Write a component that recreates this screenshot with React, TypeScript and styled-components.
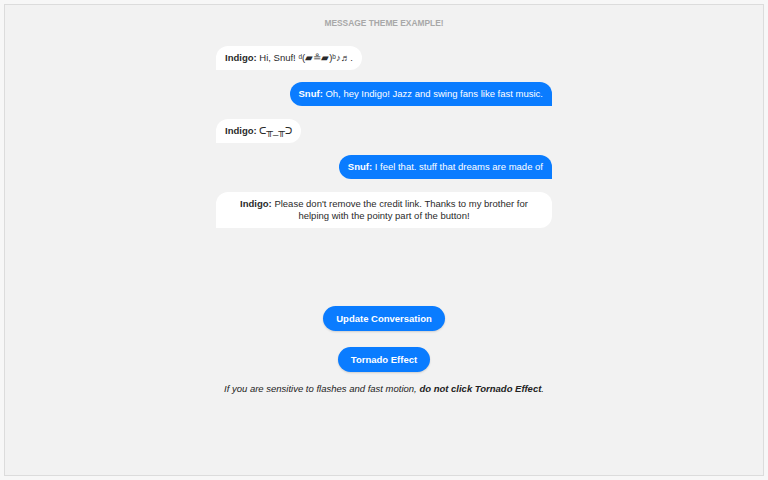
import styled, { createGlobalStyle } from 'styled-components';

const GlobalStyle = createGlobalStyle`
  html, body {
    margin: 0;
    padding: 0;
    background-color: #f7f7f7;
  }
  body {
    padding: 4px;
    font-family: "Liberation Sans", Arial, sans-serif;
  }
`;

const Frame = styled.div`
  box-sizing: border-box;
  height: 472px;
  border: 1px solid #dcdcdc;
  background-color: #f2f2f2;
  display: flex;
  flex-direction: column;
  align-items: center;
`;

const Title = styled.div`
  margin-top: 13px;
  font-size: 8.4px;
  font-weight: 700;
  color: #a8a8a8;
  text-transform: uppercase;
`;

const Conversation = styled.div`
  width: 336px;
  margin-top: 18px;
  height: 244px;
  display: flex;
  flex-direction: column;
  gap: 12.4px;
`;

const Bubble = styled.div<{ $from: 'left' | 'right'; $wide?: boolean }>`
  box-sizing: border-box;
  max-width: 100%;
  align-self: ${(p) => (p.$from === 'left' ? 'flex-start' : 'flex-end')};
  width: ${(p) => (p.$wide ? '100%' : 'auto')};
  text-align: ${(p) => (p.$wide ? 'center' : 'left')};
  padding: 6px ${(p) => (p.$wide ? '20px' : '9px')};
  font-size: 9.5px;
  line-height: 12px;
  border-radius: ${(p) => (p.$from === 'left' ? '12px 12px 12px 0' : '12px 12px 0 12px')};
  background-color: ${(p) => (p.$from === 'left' ? '#ffffff' : '#0a7cff')};
  color: ${(p) => (p.$from === 'left' ? '#2a2a2a' : '#ffffff')};

  b {
    font-weight: 700;
  }
`;

const Button = styled.button`
  margin-top: 16px;
  border: none;
  border-radius: 13px;
  height: 25px;
  padding: 0 13px;
  background-color: #0a7cff;
  color: #ffffff;
  font-family: "Liberation Sans", Arial, sans-serif;
  font-size: 9.5px;
  font-weight: 700;
  box-shadow: 0 1px 2px rgba(0, 0, 0, 0.15);
  cursor: pointer;
`;

const Warning = styled.p`
  margin: 11px 0 0;
  font-size: 9.5px;
  font-style: italic;
  color: #222222;
`;

const messages = [
  { name: 'Indigo', from: 'left', text: 'Hi, Snuf! ᵈ(▰≗▰)ᵇ♪♬.' },
  { name: 'Snuf', from: 'right', text: 'Oh, hey Indigo! Jazz and swing fans like fast music.' },
  { name: 'Indigo', from: 'left', text: 'ᑕ╥_╥ᑐ' },
  { name: 'Snuf', from: 'right', text: 'I feel that. stuff that dreams are made of' },
  {
    name: 'Indigo',
    from: 'left',
    wide: true,
    text: "Please don't remove the credit link. Thanks to my brother for helping with the pointy part of the button!",
  },
] as const;

const App = () => {
  return (
    <>
      <GlobalStyle />
      <Frame>
        <Title>Message theme example!</Title>
        <Conversation>
          {messages.map((m, i) => (
            <Bubble key={i} $from={m.from} $wide={'wide' in m ? m.wide : false}>
              <b>{m.name}:</b> {m.text}
            </Bubble>
          ))}
        </Conversation>
        <Button>Update Conversation</Button>
        <Button>Tornado Effect</Button>
        <Warning>
          If you are sensitive to flashes and fast motion, <b>do not click Tornado Effect</b>.
        </Warning>
      </Frame>
    </>
  );
};

export default App;
